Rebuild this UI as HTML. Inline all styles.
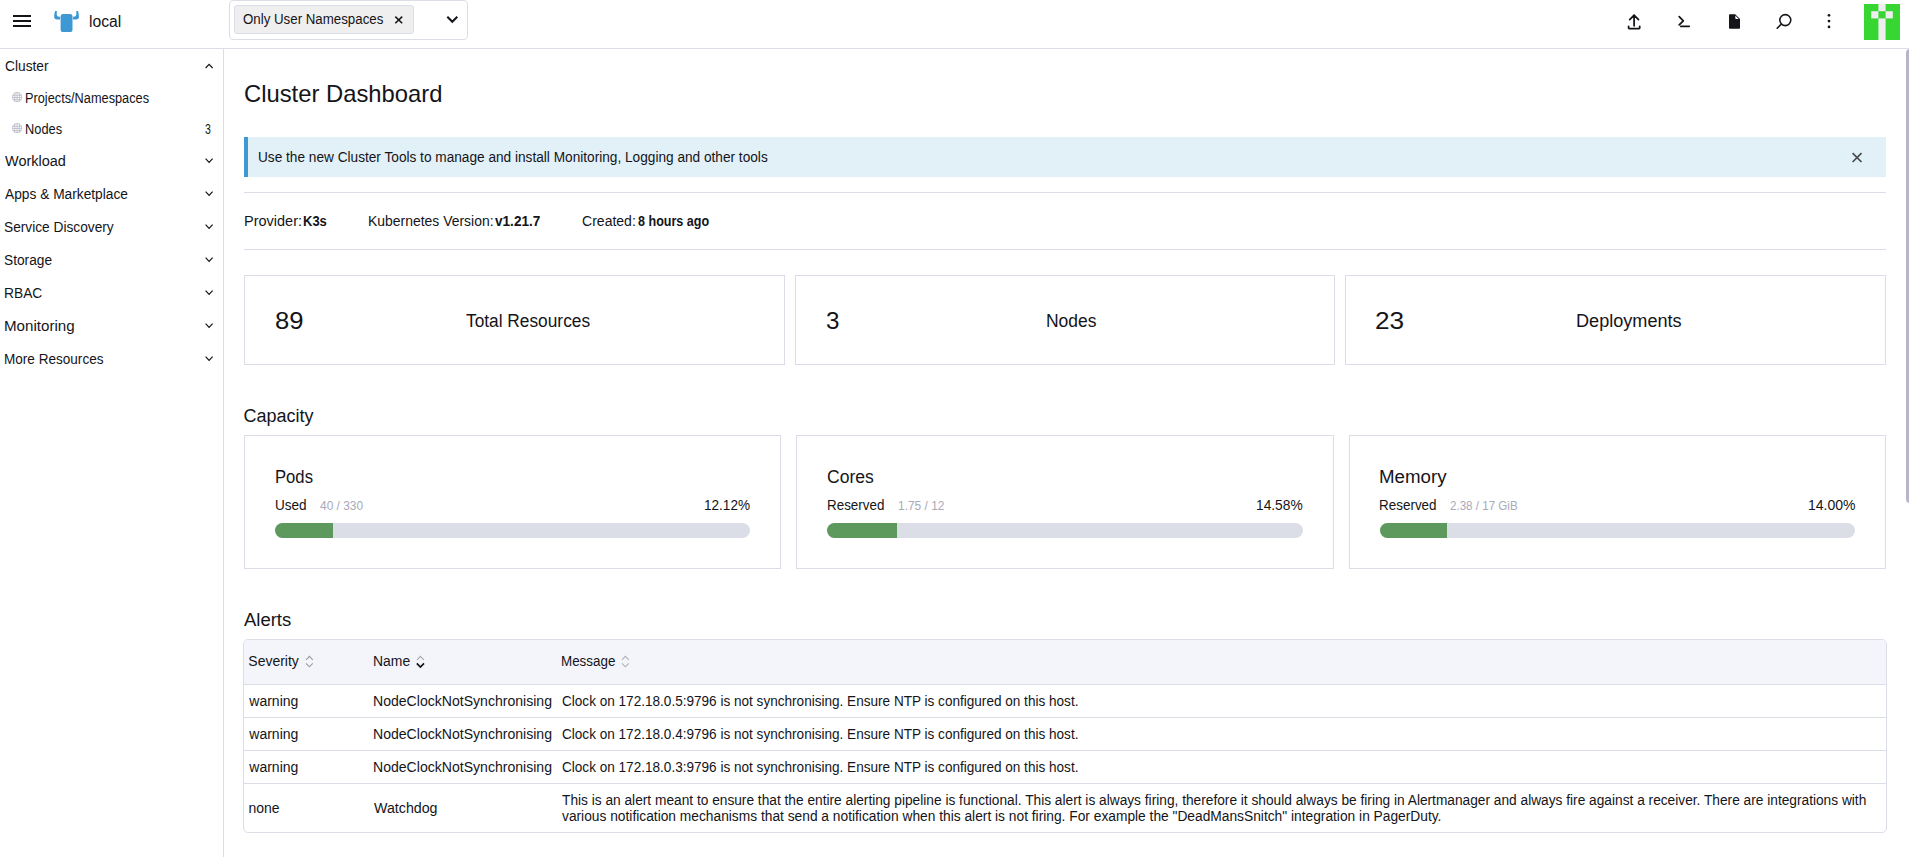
<!DOCTYPE html>
<html><head><meta charset="utf-8">
<style>
*{box-sizing:border-box;margin:0;padding:0}
html,body{width:1909px;height:857px;overflow:hidden;background:#fff}
body{font-family:"Liberation Sans",sans-serif;color:#141419;font-size:14px;position:relative}
.abs{position:absolute}
.t{position:absolute;white-space:nowrap;line-height:1;transform-origin:0 0}
#hdr{position:absolute;left:0;top:0;width:1909px;height:49px;border-bottom:1px solid #dcdee7;background:#fff}
.ham{position:absolute;left:13px;width:18px;height:2px;background:#141419}
#ns{position:absolute;left:229px;top:0;width:239px;height:40px;border:1px solid #dcdee7;border-radius:4px;background:#fff}
#tag{position:absolute;left:234px;top:5px;width:180px;height:29px;border:1px solid #dcdee7;border-radius:3px;background:#efefef}
#side{position:absolute;left:0;top:49px;width:224px;height:808px;border-right:1px solid #dcdee7;background:#fff}
.box{position:absolute;border:1px solid #dcdee7;background:#fff}
.hr{position:absolute;left:244px;width:1642px;height:1px;background:#dcdee7}
.bar{position:absolute;top:523px;height:15px;border-radius:7.5px;background:#dcdee7;overflow:hidden}
.bar i{position:absolute;left:0;top:0;bottom:0;background:#5d995d}
#tbl{position:absolute;left:243px;top:639px;width:1644px;height:194px;border:1px solid #dcdee7;border-radius:5px;overflow:hidden;background:#fff}
#thead{position:absolute;left:0;top:0;width:100%;height:45px;background:#f4f5fa;border-bottom:1px solid #dcdee7}
.rb{position:absolute;left:0;width:100%;height:1px;background:#dcdee7}
#sb{position:absolute;left:1906px;top:49px;width:8px;height:454px;border-radius:4px;background:#b6b6c8}
svg{position:absolute;overflow:visible}
</style></head><body>
<div id="hdr">
  <div class="ham" style="top:15px"></div>
  <div class="ham" style="top:20px"></div>
  <div class="ham" style="top:25px"></div>
</div>
<!-- logo -->
<svg style="left:0;top:0" width="100" height="48" viewBox="0 0 100 48">
  <g fill="#3d98d3">
    <rect x="60.6" y="14" width="11.9" height="18" rx="2.6"/>
    <path d="M55.1 11.1 L56.9 11.1 L56.7 14 Q56.9 16.8 59 16.8 L60.1 16.8 L60.1 19.5 L57 19.5 Q54.2 19.5 54.2 16.8 Q54.2 13.5 55.1 11.1 Z"/>
    <path d="M78.0 11.1 L76.2 11.1 L76.4 14 Q76.2 16.8 74.1 16.8 L73.0 16.8 L73.0 19.5 L76.1 19.5 Q78.9 19.5 78.9 16.8 Q78.9 13.5 78.0 11.1 Z"/>
  </g>
</svg>
<div id="ns"></div>
<div id="tag"></div>
<svg style="left:0;top:0" width="470" height="48" viewBox="0 0 470 48">
  <path d="M395.3 16.6 L402.2 23.3 M402.2 16.6 L395.3 23.3" stroke="#141419" stroke-width="1.5" fill="none"/>
  <path d="M447.3 16.8 L452.3 21.8 L457.3 16.8" stroke="#141419" stroke-width="2" fill="none"/>
</svg>
<!-- header right icons -->
<svg style="left:1600px;top:0" width="309" height="48" viewBox="1600 0 309 48">
  <g stroke="#141419" stroke-width="1.75" fill="none" stroke-linecap="round" stroke-linejoin="round">
    <path d="M1634.1 15.2 L1634.1 25.8 M1629.7 19.6 L1634.1 15.1 L1638.5 19.6"/>
    <path d="M1628.6 26.3 L1628.6 28 Q1628.6 28.6 1629.2 28.6 L1639.1 28.6 Q1639.7 28.6 1639.7 28 L1639.7 26.3"/>
    <path d="M1679.2 16.7 L1683.3 20.8 L1679.2 24.9"/>
    <path d="M1680.8 26.3 L1689.2 26.3"/>
  </g>
  <path d="M1729.8 14.2 L1735.2 14.2 L1740 19 L1740 28 Q1740 28.8 1739.2 28.8 L1729.8 28.8 Q1729 28.8 1729 28 L1729 15 Q1729 14.2 1729.8 14.2 Z" fill="#141419"/>
  <path d="M1735.3 15.6 L1738.7 19 L1736.1 19 Q1735.3 19 1735.3 18.2 Z" fill="#fff"/>
  <g stroke="#141419" fill="none">
    <circle cx="1785.3" cy="20.1" r="5.5" stroke-width="1.55"/>
    <path d="M1781.4 24 L1777.2 28.2" stroke-width="1.6" stroke-linecap="round"/>
  </g>
  <g fill="#141419">
    <circle cx="1829" cy="15.3" r="1.35"/>
    <circle cx="1829" cy="21.1" r="1.35"/>
    <circle cx="1829" cy="26.9" r="1.35"/>
  </g>
  <!-- avatar -->
  <rect x="1864" y="4" width="36" height="36" fill="#37d633"/>
  <g fill="#eeeeee">
    <rect x="1878.4" y="4" width="7.2" height="7.2"/>
    <rect x="1871.2" y="11.2" width="7.2" height="7.2"/>
    <rect x="1885.6" y="11.2" width="7.2" height="7.2"/>
    <rect x="1878.4" y="18.4" width="7.2" height="21.6"/>
  </g>
</svg>

<div id="side"></div>
<svg style="left:0;top:0" width="224" height="400" viewBox="0 0 224 400">
  <g stroke="#141419" stroke-width="1.2" fill="none">
    <path d="M205.6 68 L209.1 64.3 L212.6 68"/>
    <path d="M205.6 158.7 L209.1 162.4 L212.6 158.7"/>
    <path d="M205.6 191.7 L209.1 195.4 L212.6 191.7"/>
    <path d="M205.6 224.7 L209.1 228.4 L212.6 224.7"/>
    <path d="M205.6 257.7 L209.1 261.4 L212.6 257.7"/>
    <path d="M205.6 290.7 L209.1 294.4 L212.6 290.7"/>
    <path d="M205.6 323.7 L209.1 327.4 L212.6 323.7"/>
    <path d="M205.6 356.7 L209.1 360.4 L212.6 356.7"/>
  </g>
  <g fill="none" stroke="#b4b5c3" stroke-width="0.75">
    <circle cx="17.1" cy="97.1" r="4.6"/>
    <circle cx="17.1" cy="128.1" r="4.6"/>
    <path d="M12.6 95.3 H21.6 M12.6 97.5 H21.6 M12.6 99.7 H21.6 M14.8 92.6 V101.6 M17.1 92.4 V101.8 M19.4 92.6 V101.6"/>
    <path d="M12.6 126.3 H21.6 M12.6 128.5 H21.6 M12.6 130.7 H21.6 M14.8 123.6 V132.6 M17.1 123.4 V132.8 M19.4 123.6 V132.6"/>
  </g>
</svg>

<!-- banner -->
<div class="abs" style="left:244px;top:137px;width:1642px;height:40px;background:#e2f0f8;border-left:4px solid #3d98d3"></div>
<svg style="left:1840px;top:140px" width="40" height="40" viewBox="1840 140 40 40">
  <path d="M1852.6 153.1 L1861.5 162 M1861.5 153.1 L1852.6 162" stroke="#4a4a50" stroke-width="1.7" fill="none"/>
</svg>

<div class="hr" style="top:192px"></div>
<div class="hr" style="top:249px"></div>

<div class="box" style="left:244px;top:275px;width:541px;height:90px"></div>
<div class="box" style="left:795px;top:275px;width:540px;height:90px"></div>
<div class="box" style="left:1345px;top:275px;width:541px;height:90px"></div>

<div class="box" style="left:244px;top:435px;width:537px;height:134px"></div>
<div class="box" style="left:796px;top:435px;width:538px;height:134px"></div>
<div class="box" style="left:1349px;top:435px;width:537px;height:134px"></div>

<div class="bar" style="left:275px;width:475px"><i style="width:58px"></i></div>
<div class="bar" style="left:827px;width:476px"><i style="width:69.5px"></i></div>
<div class="bar" style="left:1380px;width:475px"><i style="width:66.5px"></i></div>

<div id="tbl">
  <div id="thead"></div>
  <div class="rb" style="top:77px"></div>
  <div class="rb" style="top:110px"></div>
  <div class="rb" style="top:143px"></div>
</div>
<svg style="left:240px;top:640px" width="420" height="45" viewBox="240 640 420 45">
  <g stroke="#9a9aa2" stroke-width="1.1" fill="none">
    <path d="M306 659.8 L309.4 656.4 L312.8 659.8 M306 663.4 L309.4 666.8 L312.8 663.4"/>
    <path d="M417 659.8 L420.4 656.4 L423.8 659.8" stroke="#a8a8b0"/>
    <path d="M622 659.8 L625.4 656.4 L628.8 659.8 M622 663.4 L625.4 666.8 L628.8 663.4" stroke="#b0b0b8"/>
  </g>
  <path d="M416.8 663.4 L420.4 667 L424 663.4" stroke="#141419" stroke-width="1.7" fill="none"/>
</svg>

<div class="t" style="left:89.02px;top:14px;font-size:16px;transform:scaleX(0.9806)">local</div>
<div class="t" style="left:242.50px;top:12px;font-size:14px;transform:scaleX(0.9493)">Only User Namespaces</div>
<div class="t" style="left:4.60px;top:59px;font-size:14px;transform:scaleX(0.9822)">Cluster</div>
<div class="t" style="left:25.39px;top:91px;font-size:14px;transform:scaleX(0.9111)">Projects/Namespaces</div>
<div class="t" style="left:25.38px;top:122px;font-size:14px;transform:scaleX(0.9154)">Nodes</div>
<div class="t" style="left:205.40px;top:122px;font-size:14px;transform:scaleX(0.7500)">3</div>
<div class="t" style="left:5.00px;top:154px;font-size:14px;transform:scaleX(1.0345)">Workload</div>
<div class="t" style="left:5.00px;top:187px;font-size:14px;transform:scaleX(0.9816)">Apps &amp; Marketplace</div>
<div class="t" style="left:4.02px;top:220px;font-size:14px;transform:scaleX(0.9793)">Service Discovery</div>
<div class="t" style="left:4.02px;top:253px;font-size:14px;transform:scaleX(0.9792)">Storage</div>
<div class="t" style="left:4.02px;top:286px;font-size:14px;transform:scaleX(0.9838)">RBAC</div>
<div class="t" style="left:3.92px;top:319px;font-size:14px;transform:scaleX(1.0813)">Monitoring</div>
<div class="t" style="left:4.03px;top:352px;font-size:14px;transform:scaleX(0.9686)">More Resources</div>
<div class="t" style="left:243.71px;top:82px;font-size:24px;transform:scaleX(0.9914)">Cluster Dashboard</div>
<div class="t" style="left:257.52px;top:150px;font-size:14px;transform:scaleX(0.9751)">Use the new Cluster Tools to manage and install Monitoring, Logging and other tools</div>
<div class="t" style="left:243.56px;top:214px;font-size:14px;transform:scaleX(1.0352)">Provider:</div>
<div class="t" style="left:302.87px;top:214px;font-size:14px;font-weight:700;transform:scaleX(0.9280)">K3s</div>
<div class="t" style="left:367.50px;top:214px;font-size:14px;transform:scaleX(0.9960)">Kubernetes Version:</div>
<div class="t" style="left:495.40px;top:214px;font-size:14px;font-weight:700;transform:scaleX(0.9702)">v1.21.7</div>
<div class="t" style="left:582.10px;top:214px;font-size:14px">Created:</div>
<div class="t" style="left:638.10px;top:214px;font-size:14px;font-weight:700;transform:scaleX(0.8962)">8 hours ago</div>
<div class="t" style="left:274.73px;top:309px;font-size:24px;transform:scaleX(1.0680)">89</div>
<div class="t" style="left:466.10px;top:312px;font-size:18px;transform:scaleX(0.9612)">Total Resources</div>
<div class="t" style="left:825.99px;top:309px;font-size:24px;transform:scaleX(1.0083)">3</div>
<div class="t" style="left:1046.33px;top:312px;font-size:18px;transform:scaleX(0.9706)">Nodes</div>
<div class="t" style="left:1375.41px;top:309px;font-size:24px;transform:scaleX(1.0920)">23</div>
<div class="t" style="left:1575.99px;top:312px;font-size:18px;transform:scaleX(1.0058)">Deployments</div>
<div class="t" style="left:243.40px;top:407px;font-size:18px">Capacity</div>
<div class="t" style="left:274.97px;top:468px;font-size:18px;transform:scaleX(0.9250)">Pods</div>
<div class="t" style="left:274.93px;top:498px;font-size:14px;transform:scaleX(0.9677)">Used</div>
<div class="t" style="left:319.70px;top:500px;font-size:12px;color:#a8a9b9;transform:scaleX(0.9930)">40 / 330</div>
<div class="t" style="left:704.43px;top:498px;font-size:14px;transform:scaleX(0.9696)">12.12%</div>
<div class="t" style="left:826.73px;top:468px;font-size:18px;transform:scaleX(0.9745)">Cores</div>
<div class="t" style="left:826.74px;top:498px;font-size:14px;transform:scaleX(0.9576)">Reserved</div>
<div class="t" style="left:897.81px;top:500px;font-size:12px;color:#a8a9b9;transform:scaleX(0.9933)">1.75 / 12</div>
<div class="t" style="left:1256.12px;top:498px;font-size:14px;transform:scaleX(0.9826)">14.58%</div>
<div class="t" style="left:1379.26px;top:468px;font-size:18px;transform:scaleX(1.0391)">Memory</div>
<div class="t" style="left:1379.34px;top:498px;font-size:14px;transform:scaleX(0.9610)">Reserved</div>
<div class="t" style="left:1450.10px;top:500px;font-size:12px;color:#a8a9b9;transform:scaleX(0.9657)">2.38 / 17 GiB</div>
<div class="t" style="left:1808.00px;top:498px;font-size:14px">14.00%</div>
<div class="t" style="left:244.40px;top:611px;font-size:18px;transform:scaleX(1.0261)">Alerts</div>
<div class="t" style="left:248.30px;top:654px;font-size:14px">Severity</div>
<div class="t" style="left:373.41px;top:654px;font-size:14px;transform:scaleX(0.9944)">Name</div>
<div class="t" style="left:561.44px;top:654px;font-size:14px;transform:scaleX(0.9571)">Message</div>
<div class="t" style="left:249.30px;top:694px;font-size:14px">warning</div>
<div class="t" style="left:372.90px;top:694px;font-size:14px;transform:scaleX(1.0045)">NodeClockNotSynchronising</div>
<div class="t" style="left:562.40px;top:694px;font-size:14px;transform:scaleX(0.9692)">Clock on 172.18.0.5:9796 is not synchronising. Ensure NTP is configured on this host.</div>
<div class="t" style="left:249.30px;top:727px;font-size:14px">warning</div>
<div class="t" style="left:372.90px;top:727px;font-size:14px;transform:scaleX(1.0045)">NodeClockNotSynchronising</div>
<div class="t" style="left:562.40px;top:727px;font-size:14px;transform:scaleX(0.9692)">Clock on 172.18.0.4:9796 is not synchronising. Ensure NTP is configured on this host.</div>
<div class="t" style="left:249.30px;top:760px;font-size:14px">warning</div>
<div class="t" style="left:372.90px;top:760px;font-size:14px;transform:scaleX(1.0045)">NodeClockNotSynchronising</div>
<div class="t" style="left:562.40px;top:760px;font-size:14px;transform:scaleX(0.9692)">Clock on 172.18.0.3:9796 is not synchronising. Ensure NTP is configured on this host.</div>
<div class="t" style="left:248.40px;top:801px;font-size:14px">none</div>
<div class="t" style="left:374.20px;top:801px;font-size:14px;transform:scaleX(1.0161)">Watchdog</div>
<div class="t" style="left:562.40px;top:793px;font-size:14px;transform:scaleX(0.9794)">This is an alert meant to ensure that the entire alerting pipeline is functional. This alert is always firing, therefore it should always be firing in Alertmanager and always fire against a receiver. There are integrations with</div>
<div class="t" style="left:562.40px;top:809px;font-size:14px;transform:scaleX(0.9832)">various notification mechanisms that send a notification when this alert is not firing. For example the "DeadMansSnitch" integration in PagerDuty.</div>
<div id="sb"></div>
</body></html>
